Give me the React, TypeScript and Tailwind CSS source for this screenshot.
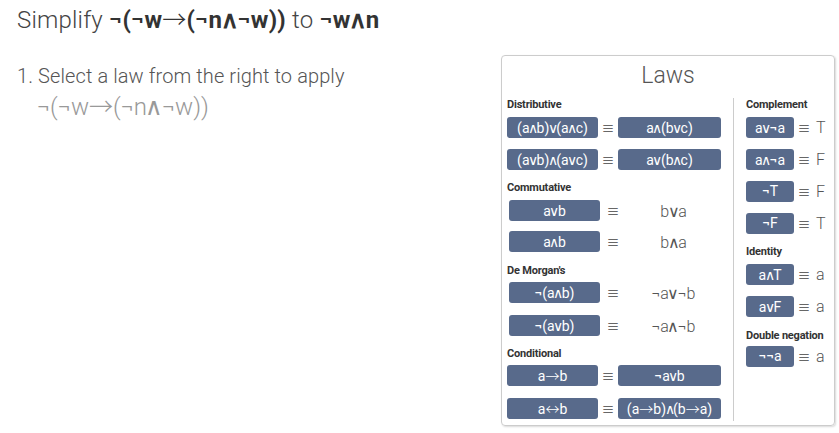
import React from "react";

const F = ({ s }: { s: string }) => (
  <>
    {Array.from(s).map((c, i) =>
      c === "→" || c === "↔" ? (
        <span key={i} className="font-['Noto_Sans_CJK_SC',sans-serif] font-light">{c}</span>
      ) : c === "∧" || c === "∨" ? (
        <span key={i} className="font-['Lato',sans-serif] mx-[-1.5px]">{c}</span>
      ) : (
        <React.Fragment key={i}>{c}</React.Fragment>
      )
    )}
  </>
);

const Btn = ({ s, w }: { s: string; w: string }) => (
  <div className={`${w} h-[21px] rounded-[3px] bg-[#586a8b] text-white text-[14px] leading-[21px] text-center whitespace-nowrap`}>
    <F s={s} />
  </div>
);

const Label = ({ children }: { children: React.ReactNode }) => (
  <div className="h-[12px] leading-[12px] text-[11px] font-bold text-[#333] tracking-[-0.2px]">{children}</div>
);

const Eq = ({ w }: { w: string }) => (
  <div className={`${w} text-center text-[13px] leading-[21px] text-[#444] font-['Noto_Sans_CJK_SC',sans-serif]`}>≡</div>
);

const Val = ({ s, w }: { s: string; w: string }) => (
  <div className={`${w} text-center text-[16px] leading-[21px] text-[#555] font-light whitespace-nowrap`}>
    <F s={s} />
  </div>
);

export default function App() {
  return (
    <div className="w-[839px] h-[433px] bg-white font-['Roboto','Noto_Sans',sans-serif]">
      <div className="flex">
        <div className="pl-[17px] w-[501px]">
          <div className="pt-[3px] text-[24px] leading-[30px] text-[#444] font-light whitespace-nowrap tracking-[0.2px]">
            Simplify{" "}
            <span className="font-bold text-[#333]">
              <F s="¬(¬w→(¬n∧¬w))" />
            </span>{" "}
            to{" "}
            <span className="font-bold text-[#333]">
              <F s="¬w∧n" />
            </span>
          </div>
          <div className="mt-[28px] text-[20px] leading-[26px] text-[#555] font-light tracking-[0.1px]">1. Select a law from the right to apply</div>
          <div className="ml-[20px] mt-[1px] text-[24px] leading-[30px] text-[#999] font-light">
            <F s="¬(¬w→(¬n∧¬w))" />
          </div>
        </div>
        <div className="mt-[55px] w-[334px] h-[371px] border border-[#ccc] rounded-[4px] shadow-[1px_1px_2px_rgba(0,0,0,0.15)] flex flex-col">
          <div className="h-[42px] pt-[6px] text-center text-[23px] leading-[28px] text-[#555] font-light">Laws</div>
          <div className="flex flex-1">
            <div className="w-[231px] pl-[5px] pb-[5px] flex flex-col">
              <div className="pt-[1px]">
                <Label>Distributive</Label>
                <div className="mt-[6px] flex flex-col gap-[11px]">
                  <div className="flex h-[21px]">
                    <Btn w="w-[91px]" s="(a∧b)∨(a∧c)" />
                    <Eq w="w-[20px]" />
                    <Btn w="w-[103px]" s="a∧(b∨c)" />
                  </div>
                  <div className="flex h-[21px]">
                    <Btn w="w-[91px]" s="(a∨b)∧(a∨c)" />
                    <Eq w="w-[20px]" />
                    <Btn w="w-[103px]" s="a∨(b∧c)" />
                  </div>
                </div>
              </div>
              <div className="mt-[12px]">
                <Label>Commutative</Label>
                <div className="mt-[6px] pl-[2px] flex flex-col gap-[10px]">
                  <div className="flex h-[21px]">
                    <Btn w="w-[91px]" s="a∨b" />
                    <Eq w="w-[26px]" />
                    <Val w="w-[95px]" s="b∨a" />
                  </div>
                  <div className="flex h-[21px]">
                    <Btn w="w-[91px]" s="a∧b" />
                    <Eq w="w-[26px]" />
                    <Val w="w-[95px]" s="b∧a" />
                  </div>
                </div>
              </div>
              <div className="mt-[13px]">
                <Label>De Morgan's</Label>
                <div className="mt-[5px] pl-[2px] flex flex-col gap-[12px]">
                  <div className="flex h-[21px]">
                    <Btn w="w-[91px]" s="¬(a∧b)" />
                    <Eq w="w-[26px]" />
                    <Val w="w-[95px]" s="¬a∨¬b" />
                  </div>
                  <div className="flex h-[21px]">
                    <Btn w="w-[91px]" s="¬(a∨b)" />
                    <Eq w="w-[26px]" />
                    <Val w="w-[95px]" s="¬a∧¬b" />
                  </div>
                </div>
              </div>
              <div className="mt-[12px]">
                <Label>Conditional</Label>
                <div className="mt-[5px] flex flex-col gap-[12px]">
                  <div className="flex h-[21px]">
                    <Btn w="w-[91px]" s="a→b" />
                    <Eq w="w-[20px]" />
                    <Btn w="w-[103px]" s="¬a∨b" />
                  </div>
                  <div className="flex h-[21px]">
                    <Btn w="w-[91px]" s="a↔b" />
                    <Eq w="w-[20px]" />
                    <Btn w="w-[103px]" s="(a→b)∧(b→a)" />
                  </div>
                </div>
              </div>
            </div>
            <div className="border-l border-[#ccc] mb-[4px] pl-[12px] flex flex-col">
              <div className="pt-[1px]">
                <Label>Complement</Label>
                <div className="mt-[6px] flex flex-col gap-[11px]">
                  {[["a∨¬a", "T"], ["a∧¬a", "F"], ["¬T", "F"], ["¬F", "T"]].map(([l, r], i) => (
                    <div key={i} className="flex h-[21px]">
                      <Btn w="w-[48px]" s={l} />
                      <Eq w="w-[20px]" />
                      <div className="text-[16px] leading-[21px] text-[#555] font-light pl-[2px]">{r}</div>
                    </div>
                  ))}
                </div>
              </div>
              <div className="mt-[12px]">
                <Label>Identity</Label>
                <div className="mt-[6px] flex flex-col gap-[11px]">
                  {[["a∧T", "a"], ["a∨F", "a"]].map(([l, r], i) => (
                    <div key={i} className="flex h-[21px]">
                      <Btn w="w-[48px]" s={l} />
                      <Eq w="w-[20px]" />
                      <div className="text-[16px] leading-[21px] text-[#555] font-light pl-[2px]">{r}</div>
                    </div>
                  ))}
                </div>
              </div>
              <div className="mt-[13px]">
                <Label>Double negation</Label>
                <div className="mt-[4px] flex flex-col gap-[11px]">
                  <div className="flex h-[21px]">
                    <Btn w="w-[48px]" s="¬¬a" />
                    <Eq w="w-[20px]" />
                    <div className="text-[16px] leading-[21px] text-[#555] font-light pl-[2px]">a</div>
                  </div>
                </div>
              </div>
            </div>
          </div>
        </div>
      </div>
    </div>
  );
}
